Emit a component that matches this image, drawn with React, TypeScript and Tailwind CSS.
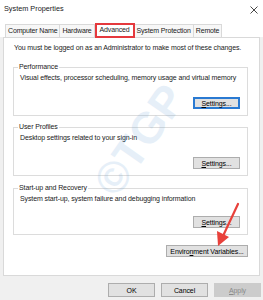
import React from 'react';

const font = { fontFamily: '"Liberation Sans", Arial, sans-serif' };

function Btn({ children, focused, disabled, className = '' }: { children: React.ReactNode; focused?: boolean; disabled?: boolean; className?: string }) {
  return (
    <button
      className={`h-[12px] text-[7px] tracking-[-0.1px] leading-none flex items-center justify-center ${
        focused
          ? 'border-2 border-[#2a7ad2] bg-[#e1e1e1] text-black'
          : disabled
          ? 'border border-[#cccccc] bg-[#cccccc] text-[#8a8a8a]'
          : 'border border-[#adadad] bg-[#e1e1e1] text-black'
      } ${className}`}
    >
      {children}
    </button>
  );
}

function Group({ title, text, focused, className = '', gap = 'mt-[15px]' }: { title: string; text: string; focused?: boolean; className?: string; gap?: string }) {
  return (
    <fieldset className={`border border-[#dcdcdc] px-[6px] pb-[6px] ${className}`}>
      <legend className="px-[1px] ml-[-2px] text-[7px] tracking-[-0.1px] leading-[8px]">{title}</legend>
      <div className="text-[7px] tracking-[-0.1px] leading-[9px] mt-[2px] whitespace-nowrap">{text}</div>
      <div className={`flex justify-end mr-[1px] ${gap}`}>
        <Btn focused={focused} className="w-[47px]">
          <span>
            <span className="underline">S</span>ettings...
          </span>
        </Btn>
      </div>
    </fieldset>
  );
}

const tab = 'h-[13px] px-[2px] border border-b-0 border-[#d9d9d9] bg-[#f7f7f7] text-[7px] tracking-[-0.15px] flex items-center';

export default function App() {
  return (
    <div className="w-[263px] h-[300px] bg-[#f0f0f0] flex flex-col text-[#1a1a1a] relative overflow-hidden" style={font}>
      {/* title bar */}
      <div className="h-[19px] bg-white flex items-center justify-between pl-[4px] pr-[4px] shrink-0">
        <span className="text-[7.3px]">System Properties</span>
        <svg width="8" height="8" viewBox="0 0 8 8" className="mr-[1px]">
          <path d="M0.5 0.5 L7.5 7.5 M7.5 0.5 L0.5 7.5" stroke="#333" strokeWidth="0.9" />
        </svg>
      </div>

      {/* tabs */}
      <div className="bg-white flex items-end pl-[5px] h-[18px] shrink-0">
        <div className={tab}>Computer Name</div>
        <div className={`${tab} border-l-0`}>Hardware</div>
        <div className="h-[15px] px-[3px] border-2 border-[#e5393d] bg-white text-[7px] tracking-[-0.15px] flex items-center -mb-[1px] relative z-10">Advanced</div>
        <div className={`${tab} border-l-0`}>System Protection</div>
        <div className={`${tab} border-l-0`}>Remote</div>
      </div>

      {/* panel */}
      <div className="mx-[3px] h-[239px] bg-white border border-[#d9d9d9] shrink-0 pl-[9px] pr-[11px] pt-[5px] flex flex-col">
        <div className="text-[7px] tracking-[-0.1px] leading-[9px] pl-[1px] whitespace-nowrap">You must be logged on as an Administrator to make most of these changes.</div>
        <Group className="mt-[11px]" title="Performance" text="Visual effects, processor scheduling, memory usage and virtual memory" focused />
        <Group className="mt-[7px]" title="User Profiles" text="Desktop settings related to your sign-in" />
        <Group className="mt-[8px]" gap="mt-[13px]" title="Start-up and Recovery" text="System start-up, system failure and debugging information" />
        <div className="flex justify-end mt-[10px]">
          <Btn className="w-[82px]">
            <span>
              Enviro<span className="underline">n</span>ment Variables...
            </span>
          </Btn>
        </div>
      </div>

      {/* bottom buttons */}
      <div className="flex justify-end gap-[6px] pr-[2px] pt-[7px]">
        <Btn className="w-[47px] h-[14px]">OK</Btn>
        <Btn className="w-[47px] h-[14px]">Cancel</Btn>
        <Btn disabled className="w-[47px] h-[14px]">
          <span>
            <span className="underline">A</span>pply
          </span>
        </Btn>
      </div>

      {/* watermark */}
      <div className="absolute left-[78px] top-[118px] -rotate-[55deg] text-[44px] font-bold text-[#5b9bd5] opacity-15 pointer-events-none leading-none">
        ©TGP
      </div>

      {/* red arrow annotation */}
      <svg className="absolute left-0 top-0 pointer-events-none" width="263" height="300">
        <line x1="238" y1="204" x2="223" y2="236" stroke="#e8413b" strokeWidth="2.2" strokeLinecap="round" />
        <polygon points="218,246 217,231 229,237" fill="#e8413b" />
      </svg>
    </div>
  );
}
